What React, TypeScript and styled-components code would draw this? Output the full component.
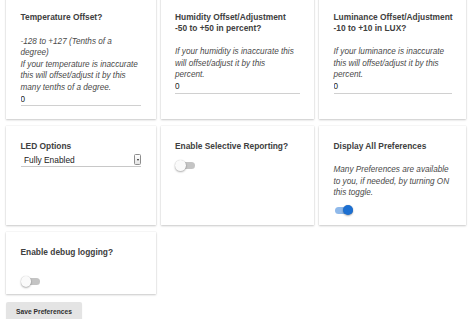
import React from "react";
import styled, { createGlobalStyle } from "styled-components";

const Global = createGlobalStyle`
  html, body { margin: 0; padding: 0; background: #ffffff; }
  body { font-family: "Liberation Sans", Arial, sans-serif; overflow: hidden; }
  * { box-sizing: border-box; }
`;

const Page = styled.div`
  width: 474px;
  height: 322px;
  padding: 0 0 0 6px;
  margin-top: -3px;
`;

const Grid = styled.div`
  display: grid;
  grid-template-columns: 149.5px 153.5px 147px;
  grid-template-rows: 122px 99px 62px;
  column-gap: 5px;
  row-gap: 7px;
`;

const Card = styled.div`
  background: #ffffff;
  padding: 15px 14.5px 0 14.5px;
  box-shadow: 0 1px 2px rgba(0, 0, 0, 0.2), 0 0 1px rgba(0, 0, 0, 0.14);
  display: flex;
  flex-direction: column;
  align-items: stretch;
`;

const Title = styled.div<{ $mb?: number }>`
  font-size: 8.4px;
  line-height: 11px;
  font-weight: 700;
  color: #404040;
  white-space: nowrap;
  margin-bottom: ${(p) => (p.$mb ?? 12.5)}px;
`;

const Desc = styled.div`
  font-size: 8.2px;
  line-height: 11.6px;
  font-style: italic;
  color: #4a4a4a;
  white-space: nowrap;
`;

const NumInput = styled.input`
  display: block;
  width: 100%;
  height: 13px;
  margin: 0;
  padding: 0;
  border: none;
  border-bottom: 1px solid #d0d0d0;
  background: transparent;
  font-family: "Liberation Sans", Arial, sans-serif;
  font-size: 8.2px;
  color: #222222;
  outline: none;
`;

const Select = styled.div`
  display: flex;
  align-items: center;
  justify-content: space-between;
  height: 13px;
  margin-top: 1.5px;
  padding-left: 3.5px;
  border-bottom: 1px solid #c8c8c8;
  font-size: 8.4px;
  color: #222222;
`;

const SelectArrow = styled.span`
  display: flex;
  align-items: center;
  justify-content: center;
  width: 7px;
  height: 10.5px;
  border: 1px solid #8d8d8d;
  border-radius: 1.5px;
  background: linear-gradient(#ffffff, #e4e4e4);
  &::after {
    content: "";
    border-left: 1.6px solid transparent;
    border-right: 1.6px solid transparent;
    border-top: 2px solid #222;
  }
`;

const SwitchWrap = styled.div<{ $mt: number }>`
  position: relative;
  width: 19.5px;
  height: 11px;
  margin-top: ${(p) => p.$mt}px;
`;

const Track = styled.div<{ $on: boolean }>`
  position: absolute;
  left: 1.5px;
  right: 0;
  top: 2.25px;
  height: 6.5px;
  border-radius: 4px;
  background: ${(p) => (p.$on ? "#8fb9ea" : "#c4c4c4")};
`;

const Knob = styled.div<{ $on: boolean }>`
  position: absolute;
  top: 0;
  left: ${(p) => (p.$on ? "9px" : "0")};
  width: 10.5px;
  height: 10.5px;
  border-radius: 50%;
  background: ${(p) => (p.$on ? "#1c6fd1" : "#fafafa")};
  box-shadow: 0 1px 2px rgba(0, 0, 0, 0.3), 0 0 1px rgba(0, 0, 0, 0.2);
`;

const Toggle = ({ on, mt }: { on: boolean; mt: number }) => (
  <SwitchWrap $mt={mt}>
    <Track $on={on} />
    <Knob $on={on} />
  </SwitchWrap>
);

const SaveButton = styled.button`
  display: block;
  margin-top: 8px;
  width: 76px;
  height: 19px;
  padding: 0;
  border: none;
  border-radius: 2px;
  background: #e4e4e4;
  box-shadow: 0 1px 1px rgba(0, 0, 0, 0.12);
  font-family: "Liberation Sans", Arial, sans-serif;
  font-size: 6.7px;
  font-weight: 700;
  color: #2e2e2e;
  text-align: center;
`;

export default function App() {
  return (
    <>
      <Global />
      <Page>
        <Grid>
          <Card>
            <Title>Temperature Offset?</Title>
            <Desc>
              -128 to +127 (Tenths of a<br />
              degree)<br />
              If your temperature is inaccurate<br />
              this will offset/adjust it by this<br />
              many tenths of a degree.
            </Desc>
            <NumInput defaultValue="0" />
          </Card>
          <Card>
            <Title $mb={12}>
              Humidity Offset/Adjustment<br />
              -50 to +50 in percent?
            </Title>
            <Desc>
              If your humidity is inaccurate this<br />
              will offset/adjust it by this<br />
              percent.
            </Desc>
            <NumInput defaultValue="0" />
          </Card>
          <Card>
            <Title $mb={12}>
              Luminance Offset/Adjustment<br />
              -10 to +10 in LUX?
            </Title>
            <Desc>
              If your luminance is inaccurate<br />
              this will offset/adjust it by this<br />
              percent.
            </Desc>
            <NumInput defaultValue="0" />
          </Card>

          <Card>
            <Title $mb={0}>LED Options</Title>
            <Select>
              <span>Fully Enabled</span>
              <SelectArrow />
            </Select>
          </Card>
          <Card>
            <Title $mb={0}>Enable Selective Reporting?</Title>
            <Toggle on={false} mt={8} />
          </Card>
          <Card>
            <Title $mb={12}>Display All Preferences</Title>
            <Desc>
              Many Preferences are available<br />
              to you, if needed, by turning ON<br />
              this toggle.
            </Desc>
            <Toggle on={true} mt={6} />
          </Card>

          <Card>
            <Title $mb={0}>Enable debug logging?</Title>
            <Toggle on={false} mt={18} />
          </Card>
        </Grid>
        <SaveButton>Save Preferences</SaveButton>
      </Page>
    </>
  );
}
